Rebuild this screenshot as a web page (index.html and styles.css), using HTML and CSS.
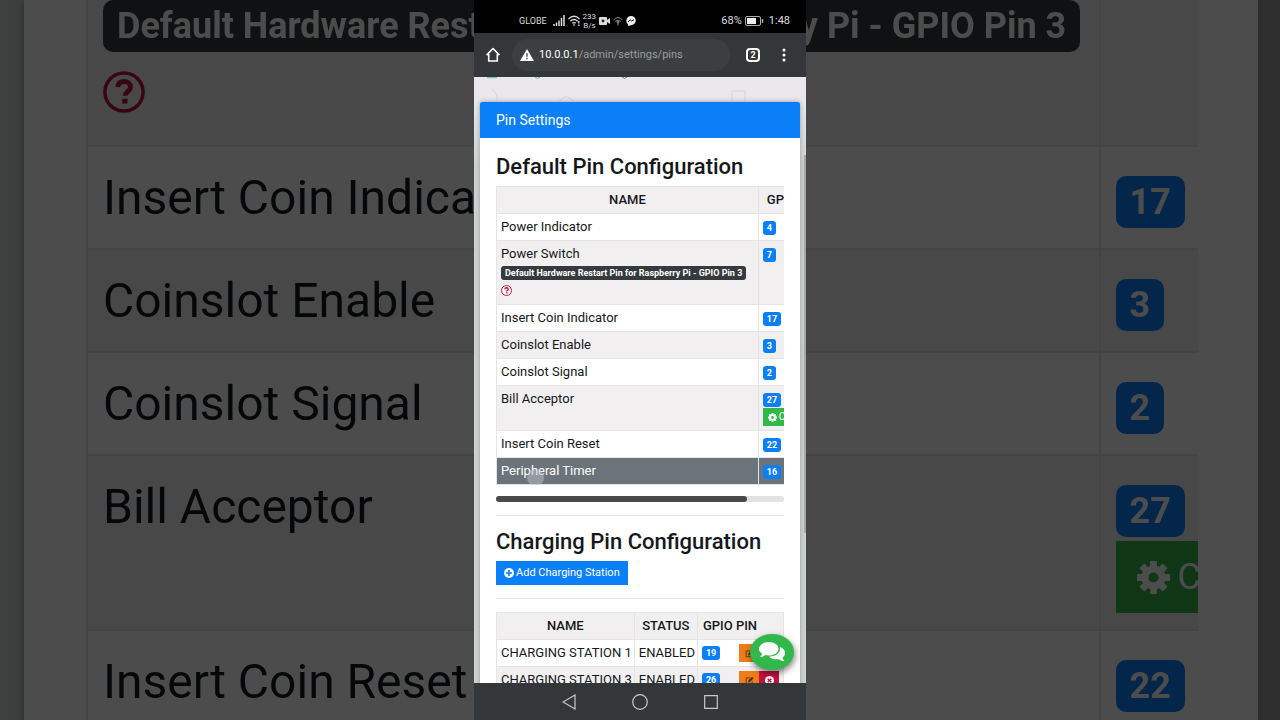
FILE: index.html
```html
<!DOCTYPE html>
<html lang="en">
<head>
    <meta charset="UTF-8">
    <meta name="viewport" content="width=device-width, initial-scale=1.0">
    <title>Pin Settings</title>
    <link rel="stylesheet" href="styles.css">
</head>
<body>
    <!-- shared icons -->
    <svg class="sprite" aria-hidden="true">
        <symbol id="i-question" viewBox="0 0 24 24">
            <circle cx="12" cy="12" r="10.9" fill="none" stroke="currentColor" stroke-width="2"/>
            <path d="M8.4 9.2c.2-2.1 1.6-3.2 3.6-3.2s3.7 1.2 3.7 3.1c0 2.6-3.1 2.6-3.1 5" fill="none" stroke="currentColor" stroke-width="2.8"/>
            <path d="M11 15.8h3v2.8h-3z" fill="currentColor"/>
        </symbol>
        <symbol id="i-gear" viewBox="0 0 24 24">
            <circle cx="12" cy="12" r="6.2" fill="none" stroke="currentColor" stroke-width="5"/>
            <path d="M12 0v5M12 19v5M0 12h5M19 12h5M3.5 3.5l3.6 3.6M16.9 16.9l3.6 3.6M3.5 20.5l3.6-3.6M16.9 7.1l3.6-3.6" stroke="currentColor" stroke-width="5"/>
        </symbol>
        <symbol id="i-edit" viewBox="0 0 24 24">
            <path d="M19 13v7.5H3V5h11" fill="none" stroke="currentColor" stroke-width="2.2"/>
            <path d="M8 17l1-5L19 2l4 4-10 10z" fill="currentColor"/>
        </symbol>
    </svg>

    <main class="stage">
        <!-- enlarged, dimmed copy behind the phone -->
        <div class="backdrop" aria-hidden="true">
            <div class="backdrop-card">
                <div class="table-clip">
                    <table class="pin-table">
                        <tr class="odd">
                            <td>
                                <span class="badge badge-dark">Default Hardware Restart Pin for Raspberry Pi - GPIO Pin 3</span>
                                <div><svg class="help"><use href="#i-question"/></svg></div>
                            </td>
                            <td></td>
                        </tr>
                        <tr><td>Insert Coin Indicator</td><td><span class="badge">17</span></td></tr>
                        <tr class="odd"><td>Coinslot Enable</td><td><span class="badge">3</span></td></tr>
                        <tr><td>Coinslot Signal</td><td><span class="badge">2</span></td></tr>
                        <tr class="odd">
                            <td>Bill Acceptor</td>
                            <td>
                                <span class="badge">27</span>
                                <button class="config" type="button" tabindex="-1"><svg><use href="#i-gear"/></svg>Configure</button>
                            </td>
                        </tr>
                        <tr><td>Insert Coin Reset</td><td><span class="badge">22</span></td></tr>
                    </table>
                </div>
            </div>
        </div>

        <div class="phone">
            <div class="status-bar">
                <span class="carrier">GLOBE</span>
                <svg width="12" height="11" viewBox="0 0 12 11"><path d="M1 11V9M3.5 11V7.5M6 11V5.5M8.5 11V3M11 11V0" stroke="#ddd" stroke-width="1.5"/></svg>
                <svg width="12" height="11" viewBox="0 0 12 11" fill="none" stroke="#ddd" stroke-width="1.4"><path d="M.5 4Q6-1.4 11.5 4M2.4 6.2q3.6-3.3 7.2 0M4.3 8.3q1.7-1.4 3.4 0"/><path d="M6 9.3v1.5M10.8 6v2.5M10.8 9.5V11"/></svg>
                <span class="speed">233<br>B/s</span>
                <svg width="11" height="8" viewBox="0 0 11 8"><rect width="8" height="8" rx="1" fill="#ddd"/><path d="M8 3l3-2v6L8 5z" fill="#ddd"/><circle cx="4" cy="4" r="1.4" fill="#222"/></svg>
                <svg width="10" height="10" viewBox="0 0 10 10" fill="none" stroke="#888" stroke-width="1"><path d="M.5 4Q5-1 9.5 4M2.2 5.5q2.8-2.8 5.6 0M5 5v4.500"/><circle cx="5" cy="6" r="1"/></svg>
                <svg width="10" height="10" viewBox="0 0 10 10"><path d="M5 0a4.8 4.6 0 0 1 0 9.2L2 10V8.2A4.7 4.7 0 0 1 5 0z" fill="#eee"/><path d="M2 6l2.2-2.3L5.7 5 8 3.7" stroke="#111" fill="none"/></svg>
                <span class="battery-text">68%</span>
                <svg width="19" height="10" viewBox="0 0 19 10"><rect x=".5" y=".5" width="15" height="9" rx="1.5" fill="none" stroke="#aaa"/><path d="M2 2h9v6H2z" fill="#eee"/><path d="M17.5 3v4" stroke="#aaa" stroke-width="1.5"/></svg>
                <span class="clock">1:48</span>
            </div>

            <div class="browser-bar">
                <button class="icon-btn" type="button" aria-label="Home">
                    <svg width="16" height="16" viewBox="0 0 16 16"><path d="M8 1.500L2 7.600h1.700V14h8.600V7.600H14z" fill="none" stroke="#fff" stroke-width="1.600" stroke-linejoin="round"/></svg>
                </button>
                <a class="address" href="#">
                    <svg width="14" height="12" viewBox="0 0 14 12"><path d="M7 0l7 12H0z" fill="#fff"/><path d="M7 4.2v3.6M7 8.8v1.5" stroke="#3b3f3f" stroke-width="1.3"/></svg>
                    <span class="url"><b>10.0.0.1</b>/admin/settings/pins</span>
                </a>
                <button class="tabs" type="button" aria-label="Open tabs">2</button>
                <button class="icon-btn" type="button" aria-label="Menu">
                    <svg width="4" height="14" viewBox="0 0 4 14" fill="#fff"><circle cx="2" cy="2" r="1.5"/><circle cx="2" cy="7" r="1.5"/><circle cx="2" cy="12" r="1.5"/></svg>
                </button>
            </div>

            <div class="page">
                <svg class="page-art" viewBox="0 0 332 26" fill="none">
                    <path d="M13 .7h10M61 0q2.500 3 5 0" stroke="#5bb9a2"/>
                    <path d="M148 0q2.500 3 5 0" stroke="#777"/>
                    <path d="M18 12q8 7 4 14M85 24l7-5 8 5M258 26V14h13v12" stroke="#d6d3d8"/>
                </svg>

                <section class="card">
                    <header class="card-header">Pin Settings</header>
                    <div class="card-body">
                        <h3>Default Pin Configuration</h3>
                        <div class="table-clip">
                            <table class="pin-table">
                                <thead>
                                    <tr><th>NAME</th><th>GPIO PIN</th></tr>
                                </thead>
                                <tbody>
                                    <tr><td>Power Indicator</td><td><span class="badge">4</span></td></tr>
                                    <tr class="odd">
                                        <td>
                                            Power Switch
                                            <div><span class="badge badge-dark">Default Hardware Restart Pin for Raspberry Pi - GPIO Pin 3</span></div>
                                            <div><svg class="help"><use href="#i-question"/></svg></div>
                                        </td>
                                        <td><span class="badge">7</span></td>
                                    </tr>
                                    <tr><td>Insert Coin Indicator</td><td><span class="badge">17</span></td></tr>
                                    <tr class="odd"><td>Coinslot Enable</td><td><span class="badge">3</span></td></tr>
                                    <tr><td>Coinslot Signal</td><td><span class="badge">2</span></td></tr>
                                    <tr class="odd">
                                        <td>Bill Acceptor</td>
                                        <td>
                                            <span class="badge">27</span>
                                            <button class="config" type="button"><svg><use href="#i-gear"/></svg>Configure</button>
                                        </td>
                                    </tr>
                                    <tr><td>Insert Coin Reset</td><td><span class="badge">22</span></td></tr>
                                    <tr class="active"><td><span class="touch">Peripheral Timer</span></td><td><span class="badge">16</span></td></tr>
                                </tbody>
                            </table>
                        </div>
                        <div class="scroll-track"><div class="scroll-thumb"></div></div>
                        <hr>

                        <h3>Charging Pin Configuration</h3>
                        <button class="add-btn" type="button">
                            <svg width="10" height="10" viewBox="0 0 10 10"><circle cx="5" cy="5" r="5" fill="#fff"/><path d="M5 2v6M2 5h6" stroke="#0b7ff8" stroke-width="1.6"/></svg>
                            Add Charging Station
                        </button>
                        <hr>

                        <table class="station-table">
                            <thead>
                                <tr><th class="name-head">NAME</th><th class="status-head">STATUS</th><th class="pin-head">GPIO PIN</th></tr>
                            </thead>
                            <tbody>
                                <tr>
                                    <td>CHARGING STATION 1</td>
                                    <td>ENABLED</td>
                                    <td>
                                        <div class="pin-cell">
                                            <span class="badge">19</span>
                                            <button class="edit" type="button" aria-label="Edit"><svg><use href="#i-edit"/></svg></button>
                                            <button class="remove" type="button" aria-label="Remove"><svg viewBox="0 0 10 10"><circle cx="5" cy="5" r="5" fill="#fff"/><path d="M3 3l4 4M7 3L3 7" stroke="#c2123f" stroke-width="1.6"/></svg></button>
                                        </div>
                                    </td>
                                </tr>
                                <tr class="odd">
                                    <td>CHARGING STATION 3</td>
                                    <td>ENABLED</td>
                                    <td>
                                        <div class="pin-cell">
                                            <span class="badge">26</span>
                                            <button class="edit" type="button" aria-label="Edit"><svg><use href="#i-edit"/></svg></button>
                                            <button class="remove" type="button" aria-label="Remove"><svg viewBox="0 0 10 10"><circle cx="5" cy="5" r="5" fill="#fff"/><path d="M3 3l4 4M7 3L3 7" stroke="#c2123f" stroke-width="1.6"/></svg></button>
                                        </div>
                                    </td>
                                </tr>
                            </tbody>
                        </table>
                    </div>
                </section>

                <div class="page-scroll"></div>
                <button class="chat" type="button" aria-label="Chat">
                    <svg width="26" height="20" viewBox="0 0 26 20" fill="#fff">
                        <path d="M21 5c3 1 5 3 5 6 0 2-1 3.500-2.500 4.500.2 1.500 1 2.500 2 3.500-2 .2-4-.6-5.500-1.800-4 .6-8-.4-10-2.700 7 .3 12-4 11-9.500z"/>
                        <path d="M10 0c5.500 0 9.500 3 9.500 6.700S15.500 13.500 10 13.500c-1.200 0-2.300-.1-3.300-.4C5 14.400 3 15 1 14.900c1-.9 1.800-2 2-3.400C1 10.300 0 8.700 0 6.700 0 3 4.500 0 10 0z"/>
                    </svg>
                </button>
            </div>

            <nav class="nav-bar">
                <button class="icon-btn" type="button" aria-label="Back"><svg width="14" height="16" viewBox="0 0 14 16"><path d="M13 1v14L1 8z" fill="none" stroke="#c8c8c8" stroke-width="1.2"/></svg></button>
                <button class="icon-btn" type="button" aria-label="Home"><svg width="16" height="16" viewBox="0 0 16 16"><circle cx="8" cy="8" r="7.3" fill="none" stroke="#c8c8c8" stroke-width="1.2"/></svg></button>
                <button class="icon-btn" type="button" aria-label="Recent"><svg width="14" height="14" viewBox="0 0 14 14"><path d="M.7.7h12.6v12.6H.7z" fill="none" stroke="#c8c8c8" stroke-width="1.2"/></svg></button>
            </nav>
        </div>
    </main>
</body>
</html>
```

FILE: styles.css
```css
* {
    margin: 0;
    padding: 0;
    box-sizing: border-box;
}

body {
    font-family: Roboto, "Liberation Sans", sans-serif;
    font-size: 13px;
    line-height: 18px;
    color: #15181b;
    background: #000;
}

button {
    font: inherit;
    color: inherit;
    background: none;
    border: 0;
    cursor: pointer;
}

svg {
    display: block;
    flex: none;
}

.sprite {
    position: absolute;
    width: 0;
    height: 0;
}

.stage {
    display: grid;
    height: 100vh;
    overflow: hidden;
}

.backdrop,
.phone {
    grid-area: 1 / 1;
    min-height: 0;
}

/* tables */

table {
    border-collapse: collapse;
}

th {
    font-weight: 500;
    text-align: center;
    background: #f1eff0;
}

th,
td {
    padding: 4px;
    border: 1px solid #e4e3e6;
    vertical-align: top;
    white-space: nowrap;
}

tr.odd {
    background: #f1eff0;
}

tr.active {
    color: #fff;
    background: #6b747a;
}

.table-clip {
    overflow: hidden;
}

.pin-table {
    width: 114%;
    table-layout: fixed;
}

.pin-table td:last-child {
    white-space: normal;
}

.pin-table th:last-child {
    padding-left: 8px;
    text-align: left;
}

.pin-table tr > :first-child {
    width: 80%;
}

.badge {
    display: inline-block;
    padding: 2px 4px;
    border-radius: 3px;
    font-size: 9px;
    line-height: 10px;
    font-weight: 700;
    color: #fff;
    background: #0b7ff8;
}

.badge-dark {
    background: #343a3d;
}

.help {
    width: 11px;
    height: 11px;
    margin: 4px 0;
    color: #c2123f;
}

.config {
    display: flex;
    align-items: center;
    gap: 2px;
    height: 18px;
    padding: 0 5px;
    font-size: 10px;
    color: #fff;
    background: #32b84a;
}

.config svg {
    width: 9px;
    height: 9px;
}

/* backdrop */

.backdrop {
    padding: 0 22px 0 24px;
    overflow: hidden;
    font-size: 48px;
    line-height: 69px;
    background: linear-gradient(to right, #cdd3d1 50%, #9b9d9c 50%);
    filter: brightness(0.3);
}

.backdrop-card {
    padding: 0 60px 0 62px;
    background: #fff;
    box-shadow: 0 0 8px #888;
}

.backdrop td {
    padding: 16px 15px;
    border-width: 2px;
}

.backdrop tr:first-child td {
    padding-top: 0;
    border-top: 0;
}

.backdrop .badge {
    padding: 7px 14px;
    border-radius: 10px;
    font-size: 36px;
    line-height: 38px;
}

.backdrop .badge-dark {
    display: block;
    width: max-content;
}

.backdrop .help {
    width: 42px;
    height: 42px;
    margin: 19px 0 16px;
}

.backdrop .config {
    gap: 8px;
    height: 72px;
    padding: 0 21px;
    font-size: 36px;
}

.backdrop .config svg {
    width: 33px;
    height: 33px;
}

/* phone */

.phone {
    position: relative;
    display: flex;
    flex-direction: column;
    justify-self: center;
    height: 100vh;
    aspect-ratio: 83 / 180;
    background: #fff;
}

.status-bar {
    display: flex;
    align-items: center;
    gap: 3px;
    flex: none;
    height: 33px;
    padding: 8px 16px 0 45px;
    color: #ddd;
    background: #000;
}

.carrier {
    margin-right: 3px;
    font-size: 9px;
}

.speed {
    font-size: 8px;
    line-height: 9px;
    text-align: center;
}

.battery-text {
    margin-left: auto;
    font-size: 11px;
}

.clock {
    margin-left: 2px;
    font-size: 11px;
}

.browser-bar {
    display: flex;
    align-items: center;
    flex: none;
    height: 44px;
    padding: 0 20px 0 11px;
    background: #34373a;
}

.address {
    display: flex;
    align-items: center;
    gap: 5px;
    flex: 1;
    height: 32px;
    margin: 0 16px 0 11px;
    padding: 0 8px;
    border-radius: 16px;
    font-size: 11px;
    color: #999d9f;
    text-decoration: none;
    background: #3b3f3f;
}

.address b {
    font-weight: 400;
    color: #fff;
}

.tabs {
    width: 14px;
    height: 14px;
    margin-right: 22px;
    border: 2px solid #fff;
    border-radius: 4px;
    font-size: 9px;
    line-height: 10px;
    font-weight: 700;
    color: #fff;
}

.page {
    position: relative;
    flex: 1;
    min-height: 0;
    padding: 25px 6px 0;
    overflow: hidden;
    background: linear-gradient(#eae8ec, #eae8ec 25px, #cdd3d1 90px);
}

.page-art {
    position: absolute;
    top: 0;
    left: 0;
    width: 100%;
}

.card {
    position: relative;
    border-radius: 2px;
    background: #fff;
    box-shadow: 0 0 5px #999;
}

.card-header {
    padding: 9px 16px;
    border-radius: 2px 2px 0 0;
    font-size: 14px;
    color: #fff;
    background: #0b7ff8;
}

.card-body {
    padding: 16px 16px 24px;
}

h3 {
    margin-bottom: 6px;
    font-size: 22px;
    line-height: 26px;
    font-weight: 500;
}

hr {
    margin: 13px 0;
    border: 0;
    border-top: 1px solid #e6e6e6;
}

.scroll-track {
    height: 6px;
    margin-top: 11px;
    border-radius: 3px;
    background: #e3e1e1;
}

.scroll-thumb {
    width: 87%;
    height: 6px;
    border-radius: 3px;
    background: #4a4a4a;
}

/* finger mark on the pressed row */
.touch {
    position: relative;
}

.touch::after {
    content: "";
    position: absolute;
    top: 6px;
    left: 26px;
    width: 17px;
    height: 17px;
    border-radius: 50%;
    background: rgba(190, 195, 200, 0.5);
}

.add-btn {
    display: flex;
    align-items: center;
    gap: 2px;
    height: 24px;
    padding: 0 8px;
    font-size: 11px;
    color: #fff;
    background: #0b7ff8;
}

.station-table {
    width: 100%;
    table-layout: fixed;
}

.name-head {
    width: 48%;
}

.status-head {
    width: 22%;
}

.station-table .pin-head {
    padding-left: 5px;
    text-align: left;
}

.pin-cell {
    display: flex;
    align-items: center;
    height: 18px;
}

.edit,
.remove {
    display: flex;
    align-items: center;
    justify-content: center;
    width: 20px;
    height: 18px;
}

.edit {
    margin-left: auto;
    color: #4a3010;
    background: #ee7c1b;
}

.remove {
    background: #c2123f;
}

.edit svg,
.remove svg {
    width: 9px;
    height: 9px;
}

.page-scroll {
    position: absolute;
    top: 78px;
    right: 0;
    width: 2px;
    height: 378px;
    background: #a6a6a6;
}

.chat {
    position: absolute;
    right: 12px;
    bottom: 13px;
    display: flex;
    align-items: center;
    justify-content: center;
    width: 44px;
    height: 36px;
    border-radius: 50%;
    background: #32b84a;
    box-shadow: 1px 3px 6px rgba(0, 0, 0, 0.5);
}

.nav-bar {
    position: relative;
    display: flex;
    align-items: center;
    justify-content: center;
    gap: 56px;
    flex: none;
    height: 37px;
    background: #34373a;
}
```
